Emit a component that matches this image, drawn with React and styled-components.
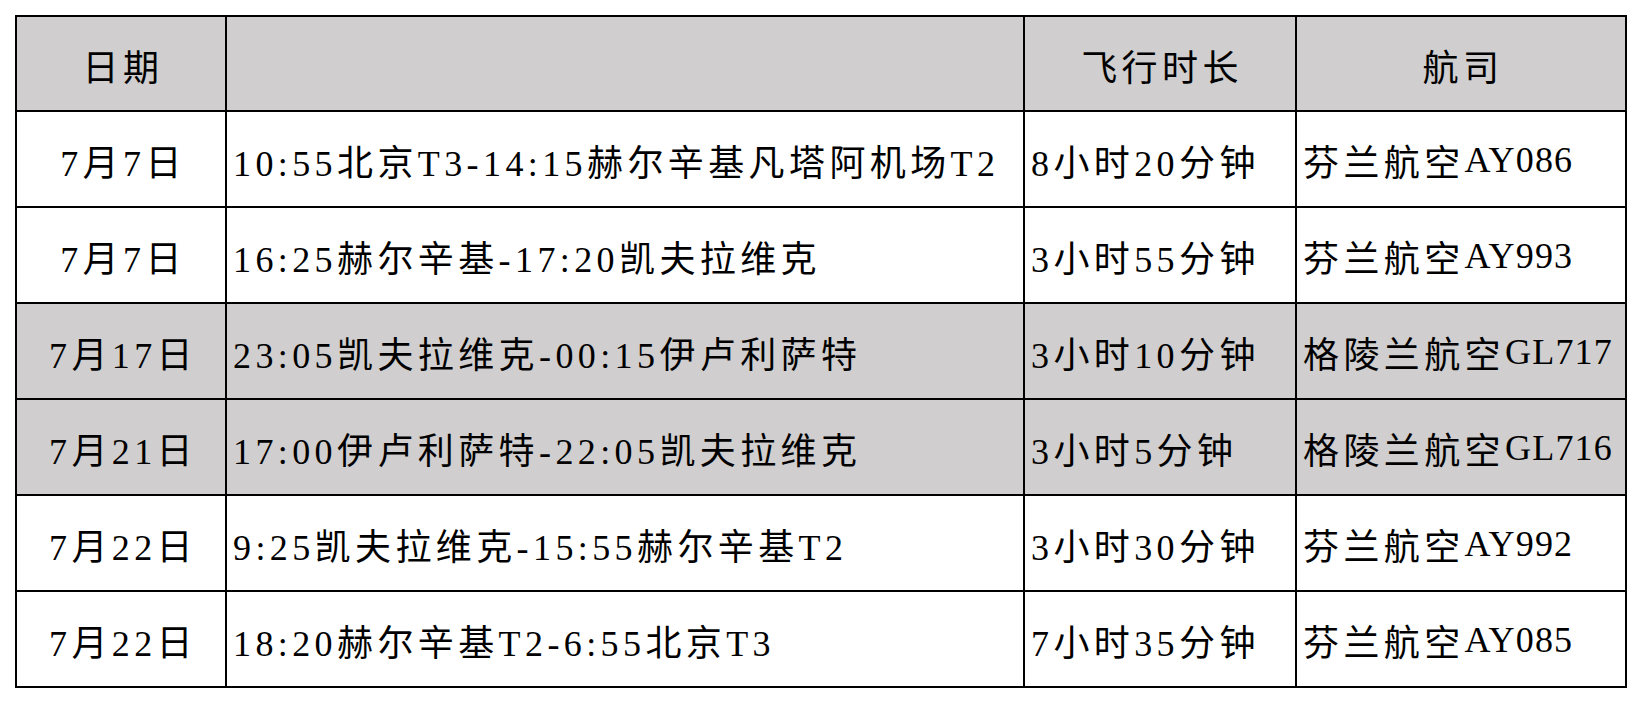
import React from 'react';
import styled, { createGlobalStyle } from 'styled-components';

const GlobalStyle = createGlobalStyle`
  html, body {
    margin: 0;
    padding: 0;
    background: #fff;
  }
`;

const flights = [
    { date: '7月7日', route: '10:55北京T3-14:15赫尔辛基凡塔阿机场T2', duration: '8小时20分钟', airline: '芬兰航空', code: 'AY086' },
    { date: '7月7日', route: '16:25赫尔辛基-17:20凯夫拉维克', duration: '3小时55分钟', airline: '芬兰航空', code: 'AY993' },
    { date: '7月17日', route: '23:05凯夫拉维克-00:15伊卢利萨特', duration: '3小时10分钟', airline: '格陵兰航空', code: 'GL717', shaded: true },
    { date: '7月21日', route: '17:00伊卢利萨特-22:05凯夫拉维克', duration: '3小时5分钟', airline: '格陵兰航空', code: 'GL716', shaded: true },
    { date: '7月22日', route: '9:25凯夫拉维克-15:55赫尔辛基T2', duration: '3小时30分钟', airline: '芬兰航空', code: 'AY992' },
    { date: '7月22日', route: '18:20赫尔辛基T2-6:55北京T3', duration: '7小时35分钟', airline: '芬兰航空', code: 'AY085' },
];

const App = () => {
    return (
        <>
            <GlobalStyle />
            <Sheet>
                <Cell $shaded $center>日期</Cell>
                <Cell $shaded></Cell>
                <Cell $shaded $center>飞行时长</Cell>
                <Cell $shaded $center>航司</Cell>
                {flights.map((f, i) => (
                    <React.Fragment key={i}>
                        <Cell $shaded={f.shaded} $center>{f.date}</Cell>
                        <Cell $shaded={f.shaded}>{f.route}</Cell>
                        <Cell $shaded={f.shaded}>{f.duration}</Cell>
                        <Cell $shaded={f.shaded}>
                            {f.airline}
                            <Code>{f.code}</Code>
                        </Cell>
                    </React.Fragment>
                ))}
            </Sheet>
        </>
    );
};

export default App;

// cells carry their own right/bottom border, so tracks include the 2px line
const Sheet = styled.div`
  display: grid;
  grid-template-columns: 210px 798px 272px 330px;
  grid-template-rows: 95px repeat(6, 96px);
  width: max-content;
  margin: 15px 0 0 15px;
  border-left: 2px solid #000;
  border-top: 2px solid #000;
  font-family: 'Liberation Serif', 'Noto Sans CJK SC', serif;
  font-size: 36px;
  letter-spacing: 4.4px;
  color: #000;
`;

const Cell = styled.div`
  display: flex;
  align-items: center;
  justify-content: ${(p) => (p.$center ? 'center' : 'flex-start')};
  padding: ${(p) => (p.$center ? '2px 0 0 4px' : '2px 0 0 6px')};
  box-sizing: border-box;
  border-right: 2px solid #000;
  border-bottom: 2px solid #000;
  background: ${(p) => (p.$shaded ? '#d0cece' : '#fff')};
  white-space: nowrap;
  overflow: hidden;
`;

// flight numbers: capitals run wide in the serif, so pull them in
const Code = styled.span`
  letter-spacing: 1.2px;
`;
